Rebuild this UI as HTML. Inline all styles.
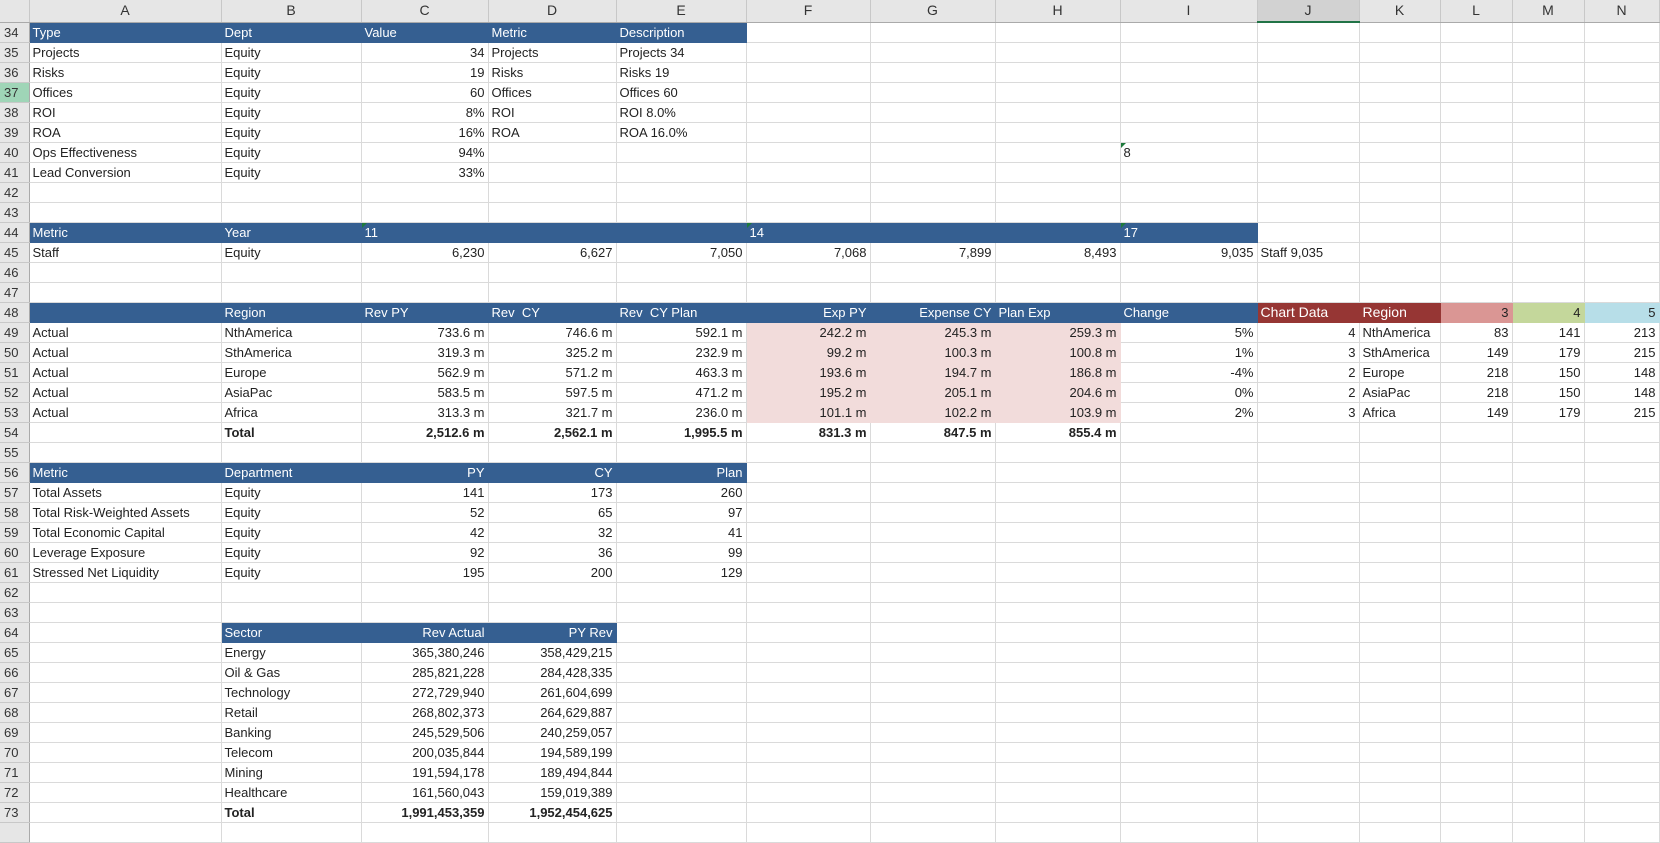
<!DOCTYPE html>
<html><head><meta charset="utf-8"><style>
body{margin:0;width:1660px;height:829px;overflow:hidden;background:#fff;font-family:"Liberation Sans",sans-serif;font-size:13px;color:#222}
table{border-collapse:collapse;table-layout:fixed;width:1662px}
td{height:19px;padding:0 3px;border-right:1px solid #dadada;border-bottom:1px solid #dadada;white-space:nowrap;overflow:hidden;line-height:19px}
tr.ch td{height:21px;background:#e6e6e6;text-align:center;color:#333;font-size:14px;border-right:1px solid #c8c8c8;border-bottom:1px solid #aaa}
td.rn{background:#e6e6e6;color:#333;padding-left:4px;border-right:1px solid #aaa;border-bottom:1px solid #c8c8c8;font-size:13px}
.h{background:#355F91;color:#fff;border-color:#355F91}
.r{text-align:right}
.b{font-weight:bold}
.p{background:#F2DCDB;border-color:#F2DCDB}
.cd{background:#963634;color:#fff;border-color:#963634;font-size:14px}
.l3{background:#DA9694;border-color:#DA9694}
.m4{background:#C4D79B;border-color:#C4D79B}
.n5{background:#B7DEE8;border-color:#B7DEE8}
.t{position:relative}
.t:before{content:"";position:absolute;left:0;top:0;border-top:5px solid #1e7a3c;border-right:5px solid transparent}
</style></head><body>
<table>
<colgroup><col style="width:29px"><col style="width:192px"><col style="width:140px"><col style="width:127px"><col style="width:128px"><col style="width:130px"><col style="width:124px"><col style="width:125px"><col style="width:125px"><col style="width:137px"><col style="width:102px"><col style="width:81px"><col style="width:72px"><col style="width:72px"><col style="width:75px"><col style="width:3px"></colgroup>
<tr class="ch"><td></td><td>A</td><td>B</td><td>C</td><td>D</td><td>E</td><td>F</td><td>G</td><td>H</td><td>I</td><td style="background:#d2d2d2;border-bottom:2px solid #217346">J</td><td>K</td><td>L</td><td>M</td><td>N</td><td></td></tr>
<tr><td class="rn">34</td><td class="h">Type</td><td class="h">Dept</td><td class="h">Value</td><td class="h">Metric</td><td class="h">Description</td><td></td><td></td><td></td><td></td><td></td><td></td><td></td><td></td><td></td><td></td></tr>
<tr><td class="rn">35</td><td>Projects</td><td>Equity</td><td class="r">34</td><td>Projects</td><td>Projects 34</td><td></td><td></td><td></td><td></td><td></td><td></td><td></td><td></td><td></td><td></td></tr>
<tr><td class="rn">36</td><td>Risks</td><td>Equity</td><td class="r">19</td><td>Risks</td><td>Risks 19</td><td></td><td></td><td></td><td></td><td></td><td></td><td></td><td></td><td></td><td></td></tr>
<tr><td class="rn" style="background:#9fd5b7">37</td><td>Offices</td><td>Equity</td><td class="r">60</td><td>Offices</td><td>Offices 60</td><td></td><td></td><td></td><td></td><td></td><td></td><td></td><td></td><td></td><td></td></tr>
<tr><td class="rn">38</td><td>ROI</td><td>Equity</td><td class="r">8%</td><td>ROI</td><td>ROI 8.0%</td><td></td><td></td><td></td><td></td><td></td><td></td><td></td><td></td><td></td><td></td></tr>
<tr><td class="rn">39</td><td>ROA</td><td>Equity</td><td class="r">16%</td><td>ROA</td><td>ROA 16.0%</td><td></td><td></td><td></td><td></td><td></td><td></td><td></td><td></td><td></td><td></td></tr>
<tr><td class="rn">40</td><td>Ops Effectiveness</td><td>Equity</td><td class="r">94%</td><td></td><td></td><td></td><td></td><td></td><td class="t">8</td><td></td><td></td><td></td><td></td><td></td><td></td></tr>
<tr><td class="rn">41</td><td>Lead Conversion</td><td>Equity</td><td class="r">33%</td><td></td><td></td><td></td><td></td><td></td><td></td><td></td><td></td><td></td><td></td><td></td><td></td></tr>
<tr><td class="rn">42</td><td></td><td></td><td></td><td></td><td></td><td></td><td></td><td></td><td></td><td></td><td></td><td></td><td></td><td></td><td></td></tr>
<tr><td class="rn">43</td><td></td><td></td><td></td><td></td><td></td><td></td><td></td><td></td><td></td><td></td><td></td><td></td><td></td><td></td><td></td></tr>
<tr><td class="rn">44</td><td class="h">Metric</td><td class="h">Year</td><td class="h t">11</td><td class="h"></td><td class="h"></td><td class="h t">14</td><td class="h"></td><td class="h"></td><td class="h t">17</td><td></td><td></td><td></td><td></td><td></td><td></td></tr>
<tr><td class="rn">45</td><td>Staff</td><td>Equity</td><td class="r">6,230</td><td class="r">6,627</td><td class="r">7,050</td><td class="r">7,068</td><td class="r">7,899</td><td class="r">8,493</td><td class="r">9,035</td><td>Staff 9,035</td><td></td><td></td><td></td><td></td><td></td></tr>
<tr><td class="rn">46</td><td></td><td></td><td></td><td></td><td></td><td></td><td></td><td></td><td></td><td></td><td></td><td></td><td></td><td></td><td></td></tr>
<tr><td class="rn">47</td><td></td><td></td><td></td><td></td><td></td><td></td><td></td><td></td><td></td><td></td><td></td><td></td><td></td><td></td><td></td></tr>
<tr><td class="rn">48</td><td class="h"></td><td class="h">Region</td><td class="h">Rev PY</td><td class="h">Rev&nbsp; CY</td><td class="h">Rev&nbsp; CY Plan</td><td class="h r">Exp PY</td><td class="h r">Expense CY</td><td class="h">Plan Exp</td><td class="h">Change</td><td class="cd">Chart Data</td><td class="cd">Region</td><td class="l3 r">3</td><td class="m4 r">4</td><td class="n5 r">5</td><td></td></tr>
<tr><td class="rn">49</td><td>Actual</td><td>NthAmerica</td><td class="r">733.6 m</td><td class="r">746.6 m</td><td class="r">592.1 m</td><td class="r p">242.2 m</td><td class="r p">245.3 m</td><td class="r p">259.3 m</td><td class="r">5%</td><td class="r">4</td><td>NthAmerica</td><td class="r">83</td><td class="r">141</td><td class="r">213</td><td></td></tr>
<tr><td class="rn">50</td><td>Actual</td><td>SthAmerica</td><td class="r">319.3 m</td><td class="r">325.2 m</td><td class="r">232.9 m</td><td class="r p">99.2 m</td><td class="r p">100.3 m</td><td class="r p">100.8 m</td><td class="r">1%</td><td class="r">3</td><td>SthAmerica</td><td class="r">149</td><td class="r">179</td><td class="r">215</td><td></td></tr>
<tr><td class="rn">51</td><td>Actual</td><td>Europe</td><td class="r">562.9 m</td><td class="r">571.2 m</td><td class="r">463.3 m</td><td class="r p">193.6 m</td><td class="r p">194.7 m</td><td class="r p">186.8 m</td><td class="r">-4%</td><td class="r">2</td><td>Europe</td><td class="r">218</td><td class="r">150</td><td class="r">148</td><td></td></tr>
<tr><td class="rn">52</td><td>Actual</td><td>AsiaPac</td><td class="r">583.5 m</td><td class="r">597.5 m</td><td class="r">471.2 m</td><td class="r p">195.2 m</td><td class="r p">205.1 m</td><td class="r p">204.6 m</td><td class="r">0%</td><td class="r">2</td><td>AsiaPac</td><td class="r">218</td><td class="r">150</td><td class="r">148</td><td></td></tr>
<tr><td class="rn">53</td><td>Actual</td><td>Africa</td><td class="r">313.3 m</td><td class="r">321.7 m</td><td class="r">236.0 m</td><td class="r p">101.1 m</td><td class="r p">102.2 m</td><td class="r p">103.9 m</td><td class="r">2%</td><td class="r">3</td><td>Africa</td><td class="r">149</td><td class="r">179</td><td class="r">215</td><td></td></tr>
<tr><td class="rn">54</td><td></td><td class="b">Total</td><td class="r b">2,512.6 m</td><td class="r b">2,562.1 m</td><td class="r b">1,995.5 m</td><td class="r b">831.3 m</td><td class="r b">847.5 m</td><td class="r b">855.4 m</td><td></td><td></td><td></td><td></td><td></td><td></td><td></td></tr>
<tr><td class="rn">55</td><td></td><td></td><td></td><td></td><td></td><td></td><td></td><td></td><td></td><td></td><td></td><td></td><td></td><td></td><td></td></tr>
<tr><td class="rn">56</td><td class="h">Metric</td><td class="h">Department</td><td class="h r">PY</td><td class="h r">CY</td><td class="h r">Plan</td><td></td><td></td><td></td><td></td><td></td><td></td><td></td><td></td><td></td><td></td></tr>
<tr><td class="rn">57</td><td>Total Assets</td><td>Equity</td><td class="r">141</td><td class="r">173</td><td class="r">260</td><td></td><td></td><td></td><td></td><td></td><td></td><td></td><td></td><td></td><td></td></tr>
<tr><td class="rn">58</td><td>Total Risk-Weighted Assets</td><td>Equity</td><td class="r">52</td><td class="r">65</td><td class="r">97</td><td></td><td></td><td></td><td></td><td></td><td></td><td></td><td></td><td></td><td></td></tr>
<tr><td class="rn">59</td><td>Total Economic Capital</td><td>Equity</td><td class="r">42</td><td class="r">32</td><td class="r">41</td><td></td><td></td><td></td><td></td><td></td><td></td><td></td><td></td><td></td><td></td></tr>
<tr><td class="rn">60</td><td>Leverage Exposure</td><td>Equity</td><td class="r">92</td><td class="r">36</td><td class="r">99</td><td></td><td></td><td></td><td></td><td></td><td></td><td></td><td></td><td></td><td></td></tr>
<tr><td class="rn">61</td><td>Stressed Net Liquidity</td><td>Equity</td><td class="r">195</td><td class="r">200</td><td class="r">129</td><td></td><td></td><td></td><td></td><td></td><td></td><td></td><td></td><td></td><td></td></tr>
<tr><td class="rn">62</td><td></td><td></td><td></td><td></td><td></td><td></td><td></td><td></td><td></td><td></td><td></td><td></td><td></td><td></td><td></td></tr>
<tr><td class="rn">63</td><td></td><td></td><td></td><td></td><td></td><td></td><td></td><td></td><td></td><td></td><td></td><td></td><td></td><td></td><td></td></tr>
<tr><td class="rn">64</td><td></td><td class="h">Sector</td><td class="h r">Rev Actual</td><td class="h r">PY Rev</td><td></td><td></td><td></td><td></td><td></td><td></td><td></td><td></td><td></td><td></td><td></td></tr>
<tr><td class="rn">65</td><td></td><td>Energy</td><td class="r">365,380,246</td><td class="r">358,429,215</td><td></td><td></td><td></td><td></td><td></td><td></td><td></td><td></td><td></td><td></td><td></td></tr>
<tr><td class="rn">66</td><td></td><td>Oil &amp; Gas</td><td class="r">285,821,228</td><td class="r">284,428,335</td><td></td><td></td><td></td><td></td><td></td><td></td><td></td><td></td><td></td><td></td><td></td></tr>
<tr><td class="rn">67</td><td></td><td>Technology</td><td class="r">272,729,940</td><td class="r">261,604,699</td><td></td><td></td><td></td><td></td><td></td><td></td><td></td><td></td><td></td><td></td><td></td></tr>
<tr><td class="rn">68</td><td></td><td>Retail</td><td class="r">268,802,373</td><td class="r">264,629,887</td><td></td><td></td><td></td><td></td><td></td><td></td><td></td><td></td><td></td><td></td><td></td></tr>
<tr><td class="rn">69</td><td></td><td>Banking</td><td class="r">245,529,506</td><td class="r">240,259,057</td><td></td><td></td><td></td><td></td><td></td><td></td><td></td><td></td><td></td><td></td><td></td></tr>
<tr><td class="rn">70</td><td></td><td>Telecom</td><td class="r">200,035,844</td><td class="r">194,589,199</td><td></td><td></td><td></td><td></td><td></td><td></td><td></td><td></td><td></td><td></td><td></td></tr>
<tr><td class="rn">71</td><td></td><td>Mining</td><td class="r">191,594,178</td><td class="r">189,494,844</td><td></td><td></td><td></td><td></td><td></td><td></td><td></td><td></td><td></td><td></td><td></td></tr>
<tr><td class="rn">72</td><td></td><td>Healthcare</td><td class="r">161,560,043</td><td class="r">159,019,389</td><td></td><td></td><td></td><td></td><td></td><td></td><td></td><td></td><td></td><td></td><td></td></tr>
<tr><td class="rn">73</td><td></td><td class="b">Total</td><td class="r b">1,991,453,359</td><td class="r b">1,952,454,625</td><td></td><td></td><td></td><td></td><td></td><td></td><td></td><td></td><td></td><td></td><td></td></tr>
<tr><td class="rn"></td><td></td><td></td><td></td><td></td><td></td><td></td><td></td><td></td><td></td><td></td><td></td><td></td><td></td><td></td><td></td></tr>
</table>
</body></html>
